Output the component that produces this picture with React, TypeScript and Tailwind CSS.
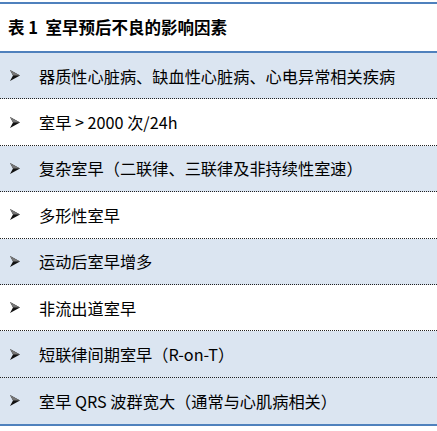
import React from "react";

const items = [
  { t: "器质性心脏病、缺血性心脏病、心电异常相关疾病", s: true },
  { t: "室早 > 2000 次/24h", s: false },
  { t: "复杂室早（二联律、三联律及非持续性室速）", s: true },
  { t: "多形性室早", s: false },
  { t: "运动后室早增多", s: true },
  { t: "非流出道室早", s: false },
  { t: "短联律间期室早（R-on-T）", s: true },
  { t: "室早 QRS 波群宽大（通常与心肌病相关）", s: true },
];

function Arrow() {
  return (
    <svg width="10" height="11" viewBox="0 0 10 11" className="shrink-0">
      <polygon points="0,0 10,5.5 0,11 3,5.5" fill="#111" />
      <polygon points="0,0 10,5.5 3,5.5" fill="#777" />
    </svg>
  );
}

export default function App() {
  return (
    <div
      className="w-[437px] h-[431px] bg-white pt-[2px] text-black"
      style={{ fontFamily: '"Noto Sans CJK SC", "Noto Sans", sans-serif' }}
    >
      <div className="border-t-[2px] border-[#4f81bd] h-[49px] flex items-center pl-[8px] text-[16.5px] font-bold">
        <span>表 1&nbsp;&nbsp;室早预后不良的影响因素</span>
      </div>
      <div className="border-t-[2px] border-[#4f81bd] border-b-[2px]">
        {items.map((it, i) => (
          <div
            key={i}
            className={`flex items-center h-[46.4px] pl-[10px] ${
              it.s ? "bg-[#dbe5f1]" : "bg-white"
            } ${i < items.length - 1 ? "border-b border-dotted border-[#222]" : ""}`}
          >
            <Arrow />
            <span className="ml-[19px] text-[16.2px] leading-none">{it.t}</span>
          </div>
        ))}
      </div>
    </div>
  );
}
